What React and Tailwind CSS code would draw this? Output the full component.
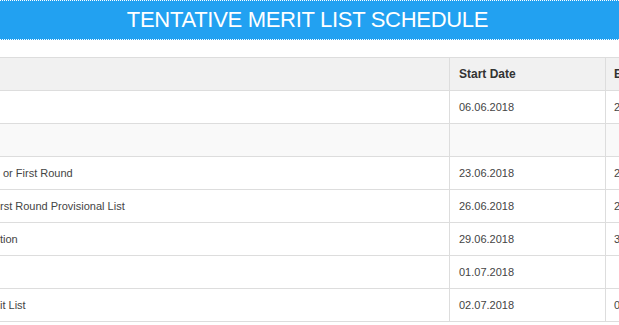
import React from 'react';

const rows = [
  { name: '', start: '06.06.2018', end: '22.06.2018', shade: false },
  { name: '', start: '', end: '', shade: true },
  { name: 'or First Round', start: '23.06.2018', end: '25.06.2018', pad: 3 },
  { name: 'rst Round Provisional List', start: '26.06.2018', end: '28.06.2018' },
  { name: 'tion', start: '29.06.2018', end: '30.06.2018' },
  { name: '', start: '01.07.2018', end: '' },
  { name: 'it List', start: '02.07.2018', end: '04.07.2018' },
];

const App = () => {
  return (
    <div className="w-[619px] h-[325px] overflow-hidden bg-white font-['Liberation_Sans',Arial,sans-serif]">
      <div className="h-[40px] bg-[#22a1f1] border-y border-dotted border-white flex items-center justify-center">
        <h1 className="text-white text-[22px] leading-none tracking-[-0.3px] -ml-[4px]">TENTATIVE MERIT LIST SCHEDULE</h1>
      </div>

      <div className="mt-[17px] border-t border-[#dddddd]">
        <div className="grid grid-cols-[450px_156px_1fr] h-[33px] bg-[#f1f1f1] border-b border-[#dddddd] text-[#333] text-[12px] font-bold">
          <div className="border-r border-[#dddddd]" />
          <div className="flex items-center pl-[9px] border-r border-[#dddddd]">Start Date</div>
          <div className="flex items-center pl-[8px] whitespace-nowrap overflow-hidden">End Date</div>
        </div>
        {rows.map((r, i) => (
          <div
            key={i}
            className={`grid grid-cols-[450px_156px_1fr] h-[33px] border-b border-[#dddddd] text-[#444] text-[11px] ${r.shade ? 'bg-[#f9f9f9]' : 'bg-white'}`}
          >
            <div className="flex items-center border-r border-[#dddddd] whitespace-nowrap">
              <span style={{ marginLeft: r.pad || 0 }}>{r.name}</span>
            </div>
            <div className="flex items-center pl-[9px] border-r border-[#dddddd]">{r.start}</div>
            <div className="flex items-center pl-[8px] whitespace-nowrap overflow-hidden">{r.end}</div>
          </div>
        ))}
      </div>
    </div>
  );
};

export default App;
